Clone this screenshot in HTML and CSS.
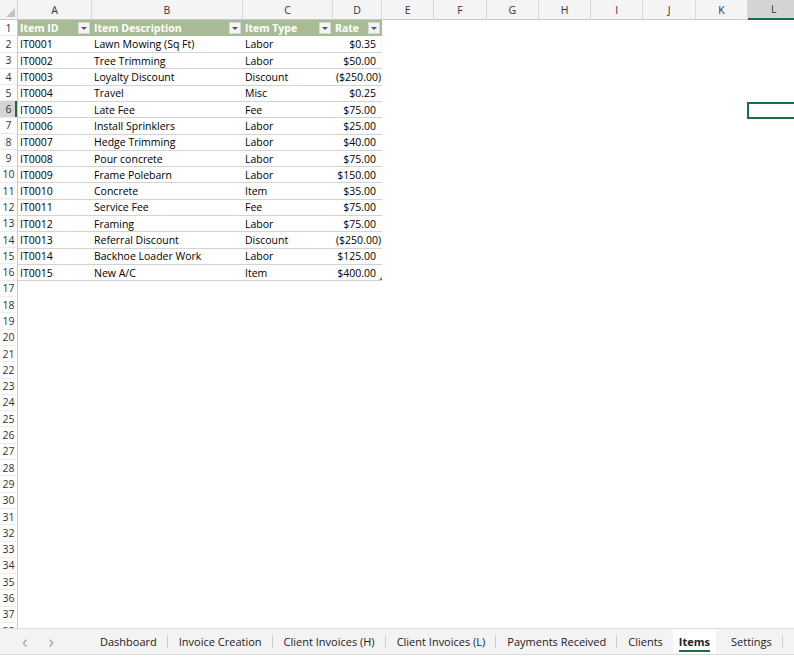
FILE: index.html
```html
<!DOCTYPE html>
<html lang="en">
<head>
    <meta charset="UTF-8">
    <title>Items</title>
    <link rel="stylesheet" href="styles.css">
</head>
<body>
<div class="sheet">
    <div class="col-headers">
        <div class="corner"><span class="corner-mark"></span></div>
        <div class="col-head w-a">A</div>
        <div class="col-head w-b">B</div>
        <div class="col-head w-c">C</div>
        <div class="col-head w-d">D</div>
        <div class="col-head w-x">E</div>
        <div class="col-head w-x">F</div>
        <div class="col-head w-x">G</div>
        <div class="col-head w-x">H</div>
        <div class="col-head w-x">I</div>
        <div class="col-head w-x">J</div>
        <div class="col-head w-x">K</div>
        <div class="col-head w-x active">L</div>
    </div>

    <div class="body">
        <div class="row-headers" id="rowHeaders"></div>
        <div class="cells">
            <table class="items">
                <colgroup>
                    <col class="w-a"><col class="w-b"><col class="w-c"><col class="w-d">
                </colgroup>
                <thead>
                    <tr>
                        <th>Item ID<span class="filter"></span></th>
                        <th>Item Description<span class="filter"></span></th>
                        <th>Item Type<span class="filter"></span></th>
                        <th>Rate<span class="filter"></span></th>
                    </tr>
                </thead>
                <tbody id="itemRows"></tbody>
            </table>
            <div class="selection"></div>
        </div>
    </div>

    <div class="tabs">
        <div class="nav-arrows">
            <span class="arrow">&lsaquo;</span>
            <span class="arrow">&rsaquo;</span>
        </div>
        <div class="tab">Dashboard</div>
        <div class="tab">Invoice Creation</div>
        <div class="tab">Client Invoices (H)</div>
        <div class="tab">Client Invoices (L)</div>
        <div class="tab">Payments Received</div>
        <div class="tab">Clients</div>
        <div class="tab current"><span>Items</span></div>
        <div class="tab">Settings</div>
    </div>
    <div class="status"></div>
</div>

<script>
    const items = [
        ["IT0001", "Lawn Mowing (Sq Ft)", "Labor", 0.35],
        ["IT0002", "Tree Trimming", "Labor", 50],
        ["IT0003", "Loyalty Discount", "Discount", -250],
        ["IT0004", "Travel", "Misc", 0.25],
        ["IT0005", "Late Fee", "Fee", 75],
        ["IT0006", "Install Sprinklers", "Labor", 25],
        ["IT0007", "Hedge Trimming", "Labor", 40],
        ["IT0008", "Pour concrete", "Labor", 75],
        ["IT0009", "Frame Polebarn", "Labor", 150],
        ["IT0010", "Concrete", "Item", 35],
        ["IT0011", "Service Fee", "Fee", 75],
        ["IT0012", "Framing", "Labor", 75],
        ["IT0013", "Referral Discount", "Discount", -250],
        ["IT0014", "Backhoe Loader Work", "Labor", 125],
        ["IT0015", "New A/C", "Item", 400]
    ];

    // Data rows
    const tbody = document.getElementById("itemRows");
    items.forEach((item, i) => {
        const tr = document.createElement("tr");
        const amount = "$" + Math.abs(item[3]).toFixed(2);
        const rate = item[3] < 0
            ? `<span class="neg">(${amount})</span>`
            : amount;
        tr.innerHTML = `<td>${item[0]}</td><td>${item[1]}</td><td>${item[2]}</td><td class="num">${rate}</td>`;
        if (i === items.length - 1) {
            tr.lastChild.innerHTML += '<span class="resize"></span>';
        }
        tbody.appendChild(tr);
    });

    // Row numbers
    const rowHeaders = document.getElementById("rowHeaders");
    for (let n = 1; n <= 38; n++) {
        const div = document.createElement("div");
        div.className = n === 6 ? "row-head active" : "row-head";
        div.textContent = n;
        rowHeaders.appendChild(div);
    }
</script>
</body>
</html>
```

FILE: styles.css
```css
* {
    box-sizing: border-box;
}
body {
    margin: 0;
    font-family: "Open Sans", "Liberation Sans", sans-serif;
    font-size: 10.5px;
    color: #000;
    background: #fff;
    overflow: hidden;
}
.sheet {
    width: 794px;
    height: 659px;
    display: flex;
    flex-direction: column;
    overflow: hidden;
}

/* column letters */
.col-headers {
    display: flex;
    height: 20px;
    flex: none;
    background: #f4f4f4;
    border-bottom: 1px solid #c9c9c9;
}
.corner {
    width: 18px;
    flex: none;
    position: relative;
    border-right: 1px solid #d4d4d4;
}
.corner-mark {
    position: absolute;
    right: 2px;
    bottom: 2px;
    width: 0;
    height: 0;
    border-left: 9px solid transparent;
    border-bottom: 9px solid #c4c4c4;
}
.col-head {
    flex: none;
    display: flex;
    align-items: center;
    justify-content: center;
    border-right: 1px solid #dadada;
    color: #333;
    font-size: 10.5px;
}
.col-head.active {
    background: #d4d4d4;
    border-bottom: 2px solid #1e6c43;
    margin-bottom: -1px;
}
.w-a { width: 74px; }
.w-b { width: 151px; }
.w-c { width: 90px; }
.w-d { width: 49px; }
.w-x { width: 52.3px; }

/* grid body */
.body {
    flex: 1;
    min-height: 0;
    display: flex;
    overflow: hidden;
}
.row-headers {
    width: 18px;
    flex: none;
    border-right: 1px solid #c9c9c9;
    background: #fff;
}
.row-head {
    height: 16.3px;
    display: flex;
    align-items: center;
    justify-content: center;
    color: #333;
    font-size: 10.5px;
    border-bottom: 1px solid #ececec;
}
.row-head.active {
    background: #d4d4d4;
    box-shadow: inset -2px 0 0 #1e6c43;
}
.cells {
    flex: 1;
    position: relative;
}

/* table */
.items {
    border-collapse: collapse;
    table-layout: fixed;
    width: 364px;
}
.items th,
.items td {
    height: 16.3px;
    padding: 0 2px;
    white-space: nowrap;
    text-align: left;
    line-height: 14px;
}
.items th {
    position: relative;
    background: #a7bc94;
    color: #fff;
    font-weight: bold;
}
.items td {
    border-bottom: 1px solid #d3d3d3;
}
.items td.num {
    text-align: right;
    padding-right: 6px;
    position: relative;
}
.neg {
    margin-right: -5px;
}
.filter {
    position: absolute;
    right: 2px;
    top: 2px;
    width: 12px;
    height: 12px;
    background: #f4f4f4;
    border: 1px solid #d6d6d6;
}
.filter::after {
    content: "";
    position: absolute;
    left: 2px;
    top: 4px;
    border-left: 3px solid transparent;
    border-right: 3px solid transparent;
    border-top: 3px solid #555;
}
.resize {
    position: absolute;
    right: 0;
    bottom: 0;
    width: 0;
    height: 0;
    border-left: 3px solid transparent;
    border-bottom: 3px solid #7a7a7a;
}

/* selected cell L6 */
.selection {
    position: absolute;
    left: 729px;
    top: 81.5px;
    width: 60px;
    height: 17px;
    border: 2px solid #1e6c43;
}

/* sheet tabs */
.tabs {
    flex: none;
    height: 27px;
    display: flex;
    align-items: stretch;
    background: #f3f3f3;
    border-top: 1px solid #dcdcdc;
    border-bottom: 1px solid #dcdcdc;
    font-family: "Open Sans", "Liberation Sans", sans-serif;
    font-size: 11px;
    color: #222;
    white-space: nowrap;
}
.nav-arrows {
    flex: none;
    display: flex;
    align-items: center;
    gap: 21px;
    padding-left: 22px;
    padding-bottom: 2px;
    width: 89px;
    color: #a8a8a8;
    font-size: 18px;
}
.tab {
    flex: none;
    display: flex;
    align-items: center;
    padding: 0 11px;
    position: relative;
}
.tab::after {
    content: "";
    position: absolute;
    right: 0;
    top: 6px;
    bottom: 6px;
    width: 1px;
    background: #cfcfcf;
}
.tab.current {
    background: #fff;
    font-weight: bold;
    padding: 0 6px;
    margin: 0 4px 0 -1px;
}
.tab.current::after {
    display: none;
}
.tab.current span {
    border-bottom: 2px solid #1e6c43;
    padding: 2px 0 1px;
}
.status {
    flex: none;
    height: 4px;
    background: #fff;
}
```
